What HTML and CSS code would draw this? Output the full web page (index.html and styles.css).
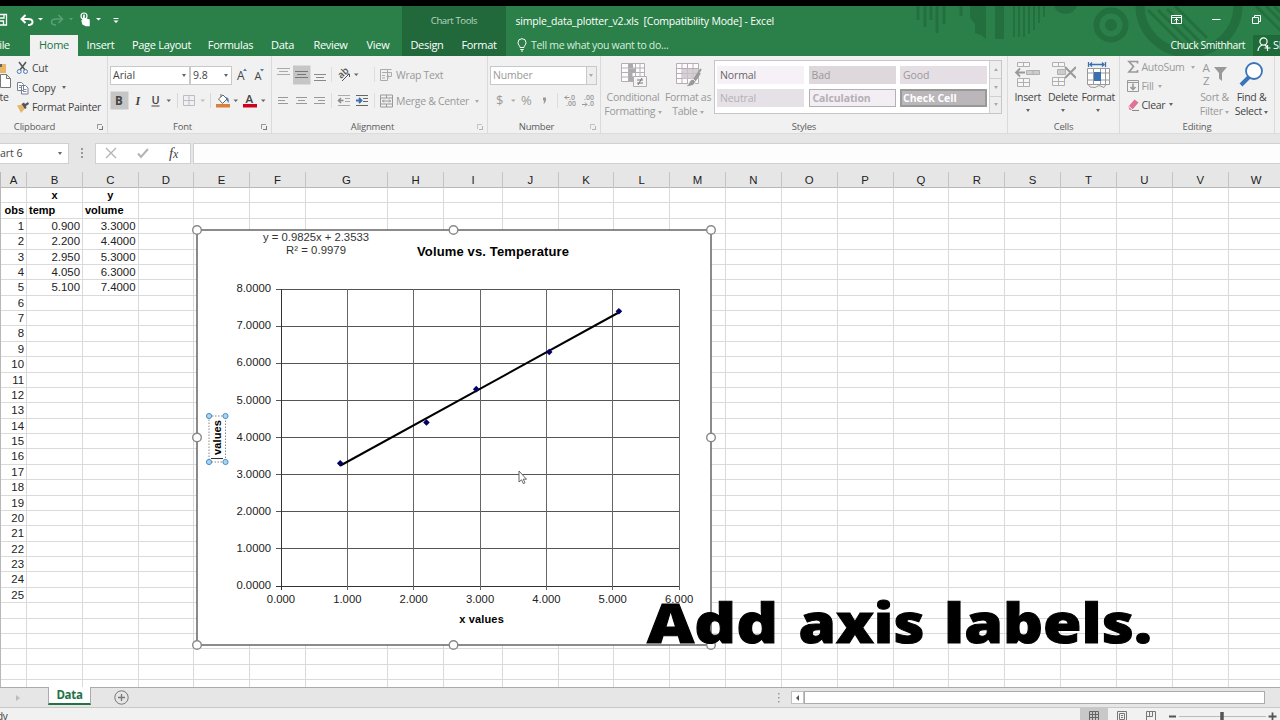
FILE: index.html
```html
<!DOCTYPE html>
<html lang="en">

<head>
  <meta charset="UTF-8">
  <meta name="viewport" content="width=device-width, initial-scale=1.0">
  <title>simple_data_plotter_v2.xls - Excel</title>
  <link rel="stylesheet" href="styles.css">
</head>

<body>
  <div class="screen">
    <div class="letterbox"></div>

    <header class="titlebar">
      <svg class="deco" viewBox="900 6 380 50" width="380" height="50">
        <g stroke="#236f3e" fill="none">
          <path d="M918 6v14M925 6v21M931 6v14M937 6v27M944 6v18M961 6v10" stroke-width="3" />
          <path d="M970 6h16v33l-5-4-6-2v-9l-5-6zM995 6h9v33h-9z" fill="#236f3e" stroke="none" />
          <path d="M1014 6v31M1019 6v31M1024 6v31M1029 6v28M1034 6v24M1039 6v17M1044 6v11" stroke-width="2" />
          <path d="M1054 6a12 11 0 0 0 23 0z" fill="#236f3e" stroke="none" />
          <circle cx="1111" cy="25" r="14.500" stroke-width="6" />
          <circle cx="1111" cy="25" r="6" fill="#236f3e" stroke="none" />
          <path d="M1140 6a48 46 0 0 0 98 0" stroke-width="9" />
          <path d="M1148 10l39 39M1158 10l37 37M1167 9l33 33M1175 6l32 32" stroke-width="3" />
          <path d="M1256 6l26 26M1266 6l16 16M1274 6l8 8" stroke-width="3" />
        </g>
      </svg>

      <div class="title-row">
        <svg class="quick" viewBox="0 6 130 29" width="130" height="29" fill="none" stroke="#fff">
          <path d="M-4 14.500h10.500v10.500h-10.500M-2 25v-4h5.500v4M-2 15v3h6v-3" stroke-width="1.300" />
          <path d="M22 19h6c6 0 6 6 0 6M25.500 15l-4 4 4 4" stroke-width="2" />
          <path d="M38 18h5l-2.500 2.500z" fill="#fff" stroke="none" />
          <g stroke="#5b9f72"><path d="M62 19h-6c-6 0-6 6 0 6M58.500 15l4 4-4 4" stroke-width="1.600" /></g>
          <path d="M69 18h4l-2 2.500z" fill="#5b9f72" stroke="none" />
          <path d="M82 20l1 4 3 1.500h3V20l-5-1.500v-4" fill="#fff" stroke-width="1.500" />
          <circle cx="84" cy="16" r="3" stroke-width="1.200" />
          <path d="M96 18h5l-2.500 2.500zM113.500 20.500h5l-2.500 2.500z" fill="#fff" stroke="none" />
          <path d="M113.500 18.500h5" stroke-width="1" />
        </svg>
        <div class="chart-tools-title">Chart Tools</div>
        <div class="doc-title">simple_data_plotter_v2.xls&nbsp; [Compatibility Mode] - Excel</div>
        <svg class="win-buttons" viewBox="1165 6 115 29" width="115" height="29" fill="none" stroke="#fff">
          <path d="M1171.500 15.500h10v8h-10zM1171.500 17.500h10M1176.500 23v-4.500M1174.500 20.500l2-2 2 2" />
          <path d="M1212 19.500h8.500M1252.500 17.500h6v6h-6zM1254.500 17v-1.500h6v6h-2" />
        </svg>
      </div>

      <nav class="tabs">
        <div class="tab file">File</div>
        <div class="tab home">Home</div>
        <div class="tab insert">Insert</div>
        <div class="tab layout">Page Layout</div>
        <div class="tab formulas">Formulas</div>
        <div class="tab data">Data</div>
        <div class="tab review">Review</div>
        <div class="tab view">View</div>
        <div class="context-tabs">
          <div class="tab design">Design</div>
          <div class="tab format">Format</div>
        </div>
        <div class="tell-me">
          <svg viewBox="0 0 10 14" width="10" height="14" fill="none" stroke="#fff">
            <path d="M3 9.500C3 7.500 1 7 1 4.700a4 4 0 0 1 8 0C9 7 7 7.500 7 9.500zM3.300 11.500h3.400M4 13h2" />
          </svg>
          <span>Tell me what you want to do...</span>
        </div>
        <div class="user">Chuck Smithhart</div>
        <div class="share">
          <svg viewBox="0 0 14 15" width="14" height="15" fill="none" stroke="#fff" stroke-width="1.200">
            <circle cx="6.500" cy="4.500" r="3.600" />
            <path d="M1 14c0-4 2-5 4-6M8 8l2 2M7.500 11h6M10.500 8v6" />
          </svg>
          <span>Share</span>
        </div>
      </nav>
    </header>

    <section class="ribbon">
      <div class="group clipboard">
        <div class="group-body">
          <div class="paste">
            <svg viewBox="0 62 12 28" width="12" height="28">
              <path d="M0 64h6v9H0z" fill="#e8b765" />
              <path d="M-2 64h4v3h-4z" fill="#666" />
              <path d="M.5 74.500h6l4 4v9H.5zM6.500 74.500v4h4" fill="#fff" stroke="#777" />
            </svg>
            <span>Paste</span>
          </div>
          <div class="stack">
            <div class="cmd">
              <svg viewBox="0 0 16 14" width="16" height="14" fill="none">
                <path d="M3 1l6 8M10 1L4 9" stroke="#555" stroke-width="1.500" />
                <circle cx="3.200" cy="10.500" r="2" stroke="#4a7ebb" /><circle cx="9.500" cy="10.500" r="2" stroke="#4a7ebb" />
              </svg>Cut</div>
            <div class="cmd">
              <svg viewBox="0 0 16 14" width="16" height="14" fill="#fff" stroke="#7a7f88">
                <path d="M1.500 1.500h4l2 2v6h-6zM5.500 4.500h4l2.500 2.500v6H5.500z" />
                <path d="M3 4.500h2M3 6.500h2M7 8.500h3.500M7 10.500h3.500" stroke="#6f94c4" />
              </svg>Copy<i class="caret wide"></i></div>
            <div class="cmd">
              <svg viewBox="0 0 16 14" width="16" height="14">
                <path d="M1 5.500l5-1 3 4-4 4.500-1.500-3z" fill="#e8b765" />
                <path d="M5.500 4l2.500-1.500 1 1.500 3-2 1 2-3 2 .5 2-1.500 1z" fill="#555" />
              </svg>Format Painter</div>
          </div>
        </div>
        <div class="group-label"><span>Clipboard</span><i class="launcher"></i></div>
      </div>

      <div class="group font">
        <div class="group-body rows">
          <div class="row">
            <div class="combo name">Arial<i class="caret"></i></div>
            <div class="combo size">9.8<i class="caret"></i></div>
            <svg viewBox="232 65 38 20" width="38" height="20">
              <text class="glyph" x="237" y="79.500" font-size="12">A</text>
              <text class="glyph" x="254.500" y="79.500" font-size="11">A</text>
              <path d="M243 71l2-2.500 2 2.500zM260 69h4l-2 2.500z" fill="#4a7ebb" />
            </svg>
          </div>
          <div class="row">
            <svg viewBox="108 91 163 20" width="163" height="20">
              <path d="M110.500 91.500h18v18h-18z" fill="#c6c6c6" />
              <text class="glyph bold" x="115" y="104.500" font-size="11.500">B</text>
              <text class="glyph ital" x="135.500" y="104.500" font-size="12">I</text>
              <text class="glyph semi" x="151.500" y="104" font-size="11">U</text>
              <path d="M151.500 106h8" stroke="#444" />
              <path d="M166.500 99.500h4.500l-2.250 2.500zM233.500 99.500h4.500l-2.250 2.500zM261 99.500h4.500l-2.250 2.500z" fill="#666" />
              <path d="M200.500 99.500h4.500l-2.250 2.500z" fill="#bbb" />
              <path d="M177.500 93v15M210.500 93v15" stroke="#d8d8d8" />
              <path d="M183.500 95.500h11v10h-11zM189 95.500v10M183.500 100.500h11" stroke="#c0bac6" fill="none" />
              <path d="M218.500 99l4.500-4 4 4-4.500 4.500zM221 97v-3" fill="#fff" stroke="#666" />
              <path d="M226 97c3 1 3 3 2.500 6l-2-3z" fill="#4a7ebb" />
              <path d="M216 104h14v3.500h-14z" fill="#dd7f3b" />
              <text class="glyph semi" x="245.500" y="103" font-size="11.500">A</text>
              <path d="M243 104h14v3.500h-14z" fill="#d0021b" />
            </svg>
          </div>
        </div>
        <div class="group-label"><span>Font</span><i class="launcher"></i></div>
      </div>

      <div class="group alignment">
        <div class="group-body rows">
          <div class="row">
            <svg viewBox="272 65 108 20" width="108" height="20" fill="none" stroke="#888">
              <path d="M293 65.500h17.500v19H293z" fill="#c6c6c6" stroke="none" />
              <path d="M277 68.500h13M279 71.500h9M277 74.500h13" stroke="#aaa" />
              <path d="M295 71.500h13M297 74.500h9M295 77.500h13" stroke="#777" />
              <path d="M314 74.500h12M316 77.500h8M314 80.500h12" />
              <path d="M331.500 67v15M374.500 67v15" stroke="#ddd" />
              <text class="glyph semi" x="0" y="0" font-size="9.500" stroke="none" transform="translate(341,79) rotate(-42)">ab</text>
              <path d="M342 81l7-7M346.500 74h3v3" stroke="#555" />
              <path d="M354 73.500h4.500l-2.250 2.500z" fill="#666" stroke="none" />
            </svg>
            <svg viewBox="0 0 16 14" width="16" height="14" fill="none" stroke="#aaa">
              <path d="M.500 1.500h7v11h-7zM2 4.500h9.500v4H7M9 6.500l-2 2 2 2M2 7.500h3M2 10h3M7.500 1.500h4" />
            </svg>
            <span class="off wrap">Wrap Text</span>
          </div>
          <div class="row">
            <svg viewBox="272 91 108 20" width="108" height="20" fill="none" stroke="#999">
              <path d="M278 97.500h10M278 100.500h7M278 103.500h10M296 97.500h11M298 100.500h7M296 103.500h11M314 97.500h11M318 100.500h7M314 103.500h11" />
              <path d="M331.500 93v15M374.500 93v15" stroke="#ddd" />
              <path d="M338 95.500h12M345 98.500h5M345 101.500h5M338 105.500h12" stroke="#aaa" />
              <path d="M338.500 100.500h5M341 98l-2.500 2.500 2.500 2.500" stroke="#888" stroke-width="1.500" />
              <path d="M356 95.500h12M363 98.500h5M363 101.500h5M356 105.500h12" stroke="#666" />
              <path d="M356 100.500h5.500M359 98l2.500 2.500-2.500 2.500" stroke="#3a6fb0" stroke-width="1.800" />
            </svg>
            <svg viewBox="0 0 16 14" width="16" height="14" fill="none" stroke="#999">
              <path d="M.500 1h12v12h-12zM.500 4h12M.500 10h12M6.500 1v3M6.500 10v3M2 7h9M4 5.500L2.500 7 4 8.500M9 5.500L10.500 7 9 8.500" />
            </svg>
            <span class="off merge">Merge &amp; Center</span><i class="caret dim"></i>
          </div>
        </div>
        <div class="group-label"><span>Alignment</span><i class="launcher dim"></i></div>
      </div>

      <div class="group number">
        <div class="group-body rows">
          <div class="row">
            <div class="combo numfmt">Number<i class="caret dim"></i></div>
          </div>
          <div class="row">
            <svg viewBox="488 91 112 20" width="112" height="20" fill="#999">
              <text class="glyph" x="496" y="105" font-size="13">$</text>
              <path d="M511 99.500h4.500l-2.250 2.500z" fill="#aaa" />
              <text class="glyph" x="521" y="105" font-size="13">%</text>
              <path d="M543 97.500h3v3l-1.500 3h-1l.7-3H543z" />
              <path d="M557.500 93v15" stroke="#ddd" />
              <g font-size="7" font-weight="600">
                <text class="glyph" x="569" y="99.500">.0</text><text class="glyph" x="566" y="106">.00</text>
                <text class="glyph" x="584" y="99.500">.00</text><text class="glyph" x="588" y="106">.0</text>
              </g>
              <path d="M564.500 97.500h5M567 95.500l-2 2 2 2M582 104.500h5M585 102.500l2 2-2 2" fill="none" stroke="#999" />
            </svg>
          </div>
        </div>
        <div class="group-label"><span>Number</span><i class="launcher dim"></i></div>
      </div>

      <div class="group styles">
        <div class="group-body">
          <div class="big off cond">
            <svg viewBox="0 0 27 26" width="27" height="26" fill="none" stroke="#b5afb5">
              <path d="M1.500 1.500h23v18h-23zM1.500 6h23M1.500 10.500h23M1.500 15h23M8.500 1.500v18M15.500 1.500v18M20 1.500v18" fill="#fdfbfd" />
              <path d="M9 2h4v4H9zM9 6.500h7v4H9zM9 11h3.500v4H9zM9 15h6v4H9z" fill="#aaa" stroke="none" />
              <path d="M13.500 14.500h13v10h-13z" fill="#f5f5f5" />
              <path d="M17 18h6M17 21h6M22 16l-4 7" stroke="#777" />
            </svg>
            <span>Conditional<br>Formatting <i class="caret dim"></i></span>
          </div>
          <div class="big off as-table">
            <svg viewBox="0 0 27 26" width="27" height="26" fill="none" stroke="#b5afb5">
              <path d="M1.500 1.500h22v20h-22zM1.500 6.500h22M1.500 11.500h22M1.500 16.500h22M7 1.500v20M12.500 1.500v20M18 1.500v20" fill="#fdfbfd" />
              <path d="M7.500 7h16v10h-16z" fill="#ccc6cc" stroke="none" opacity=".8" />
              <path d="M26 7l-8 12M25 11l-6 9" stroke="#999" stroke-width="2" />
              <path d="M18 17l2.500 2.500c-1 4-4 5-10 5 4-2 3-6 7.500-7.500z" fill="#999" stroke="#f1f1f1" />
            </svg>
            <span>Format as<br>Table <i class="caret dim"></i></span>
          </div>
          <div class="gallery">
            <div class="swatches">
              <div class="swatch normal">Normal</div>
              <div class="swatch bad">Bad</div>
              <div class="swatch good">Good</div>
              <div class="swatch neutral">Neutral</div>
              <div class="swatch calc">Calculation</div>
              <div class="swatch check">Check Cell</div>
            </div>
            <div class="gallery-scroll">
              <div><i class="caret dim up"></i></div>
              <div><i class="caret dim"></i></div>
              <div><i class="caret dim"></i></div>
            </div>
          </div>
        </div>
        <div class="group-label"><span>Styles</span></div>
      </div>

      <div class="group cells">
        <div class="group-body">
          <div class="big">
            <svg viewBox="0 0 27 26" width="27" height="26" fill="#f6f6f6" stroke="#b0b0b0">
              <path d="M3.500.500h12v4h-12zM9.500.500v4M3.500 16.500h12v8h-12zM9.500 16.500v8M3.500 20.500h12" />
              <path d="M12.500 8.500h13v4h-13zM19 8.500v4" fill="#ccc" />
              <path d="M11 10.500H2M6 6.500l-4 4 4 4" fill="none" stroke="#999" stroke-width="1.800" />
            </svg>
            <span>Insert</span><i class="caret"></i>
          </div>
          <div class="big">
            <svg viewBox="0 0 27 26" width="27" height="26" fill="#f6f6f6" stroke="#b0b0b0">
              <path d="M3.500.500h12v4h-12zM9.500.500v4M3.500 15.500h12v8h-12zM9.500 15.500v8M3.500 19.500h12" />
              <path d="M8.500 7.500h8v5h-8z" fill="#ccc" />
              <path d="M16 5l11 11M27 5L16 16" stroke="#999" stroke-width="2" />
            </svg>
            <span>Delete</span><i class="caret"></i>
          </div>
          <div class="big">
            <svg viewBox="0 0 27 26" width="27" height="26" fill="#fff" stroke="#999">
              <path d="M2.500 6.500h22v16h-22zM2.500 11h22M2.500 18h22M8.500 6.500v16M15.500 6.500v16M20.500 6.500v16" />
              <path d="M3 22l2 3 5 .500 4-2 5 2 2-3" fill="none" />
              <path d="M9 10h7v9H9z" fill="#3a6fb0" stroke="none" />
              <path d="M3.500 0v5M20.500 0v5M5 2.500h14M7 .500l-2 2 2 2M17 .500l2 2-2 2" fill="none" stroke="#3a6fb0" stroke-width="1.300" />
            </svg>
            <span>Format</span><i class="caret"></i>
          </div>
        </div>
        <div class="group-label"><span>Cells</span></div>
      </div>

      <div class="group editing">
        <div class="group-body">
          <div class="stack">
            <div class="cmd off">
              <svg viewBox="0 0 15 14" width="15" height="14" fill="none" stroke="#999" stroke-width="1.700">
                <path d="M10.500 3.500V1.500H2l4.500 5L2 12h8.500v-2" />
              </svg>AutoSum<i class="caret dim wide"></i></div>
            <div class="cmd off">
              <svg viewBox="0 0 15 14" width="15" height="14" fill="none" stroke="#999">
                <path d="M.500 1.500h11v11H.500zM.500 3.500h11" />
                <path d="M6 4.500v6M3.500 8L6 10.500 8.500 8" stroke-width="1.600" />
              </svg>Fill<i class="caret dim"></i></div>
            <div class="cmd">
              <svg viewBox="0 0 15 14" width="15" height="14">
                <path d="M1.500 8.500l6-7 4 3-6 7-3 .5z" fill="#e0729a" />
                <path d="M2 8.500l3.500 3" stroke="#fff" />
                <path d="M5 12.500h7" stroke="#888" />
              </svg>Clear<i class="caret"></i></div>
          </div>
          <div class="big off sort">
            <svg viewBox="0 0 27 26" width="27" height="26">
              <text class="glyph" x="1.500" y="9.500" font-size="11.500">A</text>
              <text class="glyph" x="2" y="22.500" font-size="11.500">Z</text>
              <path d="M13 5h13l-5 6v8l-3-2.500V11z" fill="#999" />
            </svg>
            <span>Sort &amp;<br>Filter <i class="caret dim"></i></span>
          </div>
          <div class="big find">
            <svg viewBox="0 0 27 26" width="27" height="26" fill="#fff" stroke="#3a74b8">
              <path d="M11 15l-8 8" stroke-width="4" />
              <circle cx="16" cy="9" r="8" stroke-width="1.800" />
            </svg>
            <span>Find &amp;<br>Select <i class="caret"></i></span>
          </div>
        </div>
        <div class="group-label"><span>Editing</span></div>
      </div>
    </section>

    <section class="formula-bar">
      <div class="name-box"><span>Chart 6</span><i class="caret"></i></div>
      <svg class="grip" viewBox="0 0 4 12" width="4" height="12" fill="#999">
        <path d="M1 1h2v2H1zM1 5h2v2H1zM1 9h2v2H1z" />
      </svg>
      <div class="fx-box">
        <svg viewBox="0 0 12 12" width="12" height="12" stroke="#b4b4b4" stroke-width="1.400"><path d="M1 1l10 10M11 1L1 11" /></svg>
        <svg viewBox="0 0 12 12" width="12" height="12" fill="none" stroke="#b4b4b4" stroke-width="2"><path d="M1 6.500L4 10l7-8" /></svg>
        <span class="fx">f<small>x</small></span>
      </div>
      <div class="formula-input"></div>
    </section>

    <section class="sheet">
      <div class="col-heads" id="heads"></div>
      <div class="cells-area" id="cells"></div>

      <svg class="chart" viewBox="190 222 530 430" width="530" height="430">
        <rect x="197" y="230" width="514" height="415" fill="#fff" stroke="#666" stroke-width="1.500" />
        <g id="plot-grid" fill="none" shape-rendering="crispEdges"></g>
        <path class="trend" d="M340.500 465.500L620.500 311.500" />
        <g id="points" fill="#000066"></g>
        <text class="eq" x="316" y="241" textLength="106">y = 0.9825x + 2.3533</text>
        <text class="eq" x="316" y="254" textLength="60">R² = 0.9979</text>
        <text class="chart-title" x="493" y="256" textLength="152">Volume vs. Temperature</text>
        <text class="axis-title" x="481.500" y="623" textLength="44.500">x values</text>
        <g id="axis-labels"></g>

        <rect x="209" y="416" width="16.500" height="46" fill="none" stroke="#888" stroke-dasharray="1.500 1.500" />
        <text class="axis-title" transform="translate(221,437.500) rotate(-90)" textLength="35">values</text>
        <path d="M211 458.500h12" stroke="#333" />
        <g fill="#a9d3f0" stroke="#4a90c8">
          <circle cx="209" cy="416" r="2.600" /><circle cx="225.500" cy="416" r="2.600" />
          <circle cx="209" cy="462" r="2.600" /><circle cx="225.500" cy="462" r="2.600" />
        </g>
        <g fill="#fff" stroke="#888" stroke-width="1.400">
          <circle cx="197" cy="230" r="4.300" /><circle cx="453.500" cy="230" r="4.300" /><circle cx="711" cy="230" r="4.300" />
          <circle cx="197" cy="437.500" r="4.300" /><circle cx="711" cy="437.500" r="4.300" />
          <circle cx="197" cy="645" r="4.300" /><circle cx="453.500" cy="645" r="4.300" /><circle cx="711" cy="645" r="4.300" />
        </g>
        <path d="M519 471v11l2.500-2.200 1.800 3.800 1.700-.800-1.700-3.600h3.200z" fill="#fff" stroke="#555" stroke-width=".900" />
      </svg>
    </section>

    <section class="sheet-tabs">
      <i class="nav-arrow"></i>
      <div class="sheet-tab">Data</div>
      <svg class="add" viewBox="0 0 15 15" width="15" height="15" fill="none" stroke="#777">
        <circle cx="7.500" cy="7.500" r="6.700" /><path d="M7.500 4v7M4 7.500h7" stroke-width="1.300" />
      </svg>
      <svg class="grip" viewBox="0 0 4 12" width="4" height="12" fill="#999">
        <path d="M1 1h1.500v1.500H1zM1 5h1.500v1.500H1zM1 9h1.500v1.500H1z" />
      </svg>
      <div class="scroll-left"><i></i></div>
      <div class="scroll-thumb"></div>
    </section>

    <footer class="status">
      <span class="ready">Ready</span>
      <div class="view-btn active">
        <svg viewBox="0 0 10 10" width="10" height="10" fill="none" stroke="#666"><path d="M.500.500h9v9h-9zM.500 3.500h9M.500 6.500h9M3.500.500v9M6.500.500v9" /></svg>
      </div>
      <div class="view-btn">
        <svg viewBox="0 0 10 10" width="10" height="10" fill="none" stroke="#777"><path d="M.500.500h9v9h-9zM2.500 2.500h5v6h-5zM4 4.500h2M4 6.500h2" /></svg>
      </div>
      <div class="view-btn">
        <svg viewBox="0 0 10 10" width="10" height="10" fill="none" stroke="#777"><path d="M.500 10V.500h9V10M3.500.500v5M6.500.500v5h-6" /></svg>
      </div>
      <svg class="zoom" viewBox="1165 708 115 12" width="115" height="12" fill="none" stroke="#555">
        <path d="M1169 716.500h7M1268.500 716.500h8M1272.500 712.500v8" stroke-width="1.800" />
        <path d="M1179 716.500h87" stroke="#bbb" /><path d="M1222 712v8" stroke-width="3.500" />
      </svg>
    </footer>

    <svg class="caption" viewBox="640 590 520 66" width="520" height="66">
      <text x="647" y="642.500" textLength="131" lengthAdjust="spacingAndGlyphs">Add</text>
      <text x="798.500" y="642.500" textLength="126" lengthAdjust="spacingAndGlyphs">axis</text>
      <text x="944" y="642.500" textLength="208" lengthAdjust="spacingAndGlyphs">labels.</text>
    </svg>
  </div>

  <script src="sheet.js"></script>
</body>

</html>
```

FILE: styles.css
```css
* {
  box-sizing: border-box;
}

body {
  margin: 0;
  font-family: "Open Sans", "Noto Sans", sans-serif;
  font-size: 10.5px;
  letter-spacing: -0.3px;
  color: #444;
}

svg {
  display: block;
  flex: none;
}

.screen {
  position: relative;
  width: 1280px;
  height: 720px;
  overflow: hidden;
  display: flex;
  flex-direction: column;
  background: #e6e6e6;
}

.letterbox {
  height: 6px;
  background: #000;
}

/* title bar */
.titlebar {
  position: relative;
  height: 50px;
  background: #2a8048;
  color: #fff;
}

.deco {
  position: absolute;
  top: 0;
  right: 0;
}

.title-row {
  position: relative;
  display: flex;
  height: 29px;
  line-height: 30px;
}

.chart-tools-title {
  width: 104px;
  margin-left: 272px;
  background: #21683b;
  color: #b7d8c2;
  text-align: center;
  font-size: 9.6px;
  letter-spacing: -0.4px;
}

.doc-title {
  margin-left: 9.5px;
  font-size: 10.5px;
  letter-spacing: -0.2px;
  white-space: nowrap;
}

.win-buttons {
  margin-left: auto;
}

.tabs {
  position: relative;
  display: flex;
  height: 21px;
  line-height: 20px;
  font-size: 11px;
  letter-spacing: -0.3px;
  white-space: nowrap;
}

.tab {
  flex: none;
  text-align: center;
}

.file { width: 30px; padding-right: 20px; display: flex; justify-content: flex-end; }
.home { width: 48px; background: #f1f1f1; color: #217346; }
.insert { width: 45px; }
.layout { width: 77px; }
.formulas { width: 61px; }
.data { width: 43px; }
.review { width: 53px; }
.view { width: 42px; }

.context-tabs {
  display: flex;
  margin-left: 3px;
  width: 104px;
  background: #21683b;
}

.design { width: 50px; }
.format { width: 54px; }

.tell-me {
  display: flex;
  gap: 4px;
  width: 658px;
  padding-left: 11px;
  color: #d9ecdf;
  font-size: 10.5px;
}

.tell-me svg {
  margin-top: 3px;
}

.user {
  width: 89px;
  padding-left: 6.5px;
  font-size: 10.4px;
  letter-spacing: -0.4px;
}

.share {
  display: flex;
  gap: 2px;
  width: 27px;
  padding: 0 0 0 4px;
  overflow: hidden;
  background: #1f6a39;
}

.share svg {
  margin-top: 2px;
}

/* ribbon */
.ribbon {
  display: flex;
  height: 78px;
  background: #f1f1f1;
  border-bottom: 1px solid #dcdcdc;
}

.group {
  flex: none;
  display: flex;
  flex-direction: column;
  border-right: 1px solid #dadada;
  white-space: nowrap;
}

.group-body {
  display: flex;
  height: 64px;
}

.group-label {
  display: flex;
  justify-content: center;
  height: 13px;
  line-height: 13px;
  font-size: 9.5px;
  letter-spacing: -0.2px;
  color: #5c5c5c;
  position: relative;
}

.clipboard { width: 108px; }
.font { width: 164px; }
.alignment { width: 216px; }
.number { width: 113px; }
.styles { width: 407px; }
.cells { width: 112px; }
.editing { width: 155px; }

.clipboard .group-label { padding-right: 38px; }
.font .group-label { padding-right: 14px; }
.alignment .group-label { padding-right: 14px; }
.number .group-label { padding-right: 15px; }

.launcher {
  position: absolute;
  right: 5px;
  top: 4px;
  width: 5px;
  height: 5px;
  border-left: 1px solid #999;
  border-top: 1px solid #999;
}

.launcher::after {
  content: "";
  position: absolute;
  left: 1px;
  top: 1px;
  width: 3px;
  height: 3px;
  border-right: 1px solid #777;
  border-bottom: 1px solid #777;
}

.launcher.dim {
  opacity: 0.5;
}

.caret {
  display: inline-block;
  flex: none;
  width: 0;
  height: 0;
  border: 2.5px solid transparent;
  border-width: 3px 2.5px 0;
  border-top-color: #666;
  vertical-align: middle;
}

.caret.dim { border-top-color: #aaa; }
.caret.up { transform: rotate(180deg); }

.off {
  color: #999;
}

.paste {
  width: 16px;
  padding-top: 6px;
  overflow: hidden;
}

.paste span {
  display: flex;
  justify-content: flex-end;
  width: 8.5px;
}

.stack {
  padding-top: 2.5px;
}

.cmd {
  display: flex;
  align-items: center;
  height: 19.5px;
}

.cmd .caret { margin-left: 4px; }
.cmd .caret.wide { margin-left: 7px; }

.rows {
  flex-direction: column;
  gap: 6px;
  padding-top: 9px;
}

.row {
  display: flex;
  align-items: center;
  height: 20px;
}

.combo {
  display: flex;
  align-items: center;
  justify-content: space-between;
  height: 19px;
  padding: 0 3px 0 2px;
  background: #fff;
  border: 1px solid #c8c8c8;
  letter-spacing: 0;
}

.combo.name { width: 80px; margin-left: 2px; }
.combo.size { width: 42px; }

.combo.numfmt {
  width: 107px;
  margin-left: 2px;
  color: #999;
  letter-spacing: -0.2px;
  background: linear-gradient(to right, #fff 95px, #c8c8c8 95px, #c8c8c8 96px, #eee 96px);
}

.glyph { fill: #444; letter-spacing: 0; }
.alignment .glyph { fill: #555; }
.number .glyph, .sort .glyph { fill: #999; }
.bold { font-weight: 700; }
.semi { font-weight: 600; }
.ital { font-style: italic; font-family: "Liberation Serif", serif; font-weight: 700; }

.merge { margin-right: 6px; }

.big {
  display: flex;
  flex-direction: column;
  align-items: center;
  padding-top: 6px;
  line-height: 14px;
  text-align: center;
}

.big span {
  margin-top: 2px;
}

.big > .caret {
  margin-top: 5px;
}

.cond { width: 58px; margin-left: 3px; }
.as-table { width: 52px; }

.gallery {
  display: flex;
  width: 288px;
  height: 54px;
  margin-top: 4px;
  background: #fff;
  border: 1px solid #c6c6c6;
}

.swatches {
  display: grid;
  grid-template-columns: repeat(3, 87px);
  grid-template-rows: 18px 18px;
  gap: 5px 4.5px;
  padding: 5px 2px;
}

.swatch {
  padding-left: 3px;
  line-height: 18px;
  background: #e5dfe5;
  color: #999;
  letter-spacing: -0.1px;
}

.swatch.normal { background: #f6f1f6; color: #666; }
.swatch.bad { background: #ded8dc; }
.swatch.neutral { background: #e6e1e7; color: #b4afb4; }
.swatch.calc { background: #f2eef3; border: 1px solid #b5b0b5; line-height: 16px; font-weight: 700; color: #b4afb4; letter-spacing: -0.1px; }
.swatch.check { background: #bab6ba; border: 2px solid #999; line-height: 14px; font-weight: 700; color: #fff; padding-left: 1px; letter-spacing: 0; }

.gallery-scroll {
  display: grid;
  grid-template-rows: repeat(3, 1fr);
  width: 13px;
  margin-left: auto;
  background: #eee;
  border-left: 1px solid #d0d0d0;
}

.gallery-scroll div {
  display: flex;
  align-items: center;
  justify-content: center;
}

.gallery-scroll div + div {
  border-top: 1px solid #d0d0d0;
}

.cells .big { width: 35.3px; }
.cells .big:first-child { margin-left: 2px; }

.editing .stack { width: 76px; padding-left: 6.5px; padding-top: 2px; }
.editing .cmd { height: 18.7px; }
.editing .big { width: 37px; }

/* formula bar */
.formula-bar {
  display: flex;
  align-items: center;
  height: 38px;
  flex: none;
}

.name-box {
  display: flex;
  align-items: center;
  justify-content: space-between;
  width: 69px;
  height: 21px;
  padding-right: 6px;
  background: #fff;
  border: 1px solid #d0d0d0;
  border-left: 0;
  letter-spacing: 0;
}

.name-box span {
  display: flex;
  justify-content: flex-end;
  width: 22.5px;
  white-space: nowrap;
}

.formula-bar .grip {
  margin-left: 11px;
}

.fx-box {
  display: flex;
  align-items: center;
  width: 96px;
  height: 21px;
  margin-left: 11px;
  padding-left: 9px;
  gap: 20px;
  background: #fff;
  border: 1px solid #d0d0d0;
}

.fx {
  font: italic 15px "Liberation Serif", serif;
  color: #444;
}

.fx small {
  font-size: 12px;
}

.formula-input {
  flex: 1;
  height: 21px;
  margin-left: 2px;
  background: #fdfdfd;
  border: 1px solid #d0d0d0;
  border-right: 0;
}

/* sheet */
.sheet {
  position: relative;
  height: 515px;
  flex: none;
  overflow: hidden;
  background: #fff;
  font-family: "Liberation Sans", Arial, sans-serif;
  font-size: 11.4px;
  letter-spacing: 0;
  color: #222;
  border-left: 1px solid #b8b8b8;
}

.col-heads,
.cells-area {
  display: grid;
  grid-template-columns: 26px 56px 55.500px 55.500px 56px 56px 82px 56px 59px 55.700px 55.700px 55.800px repeat(11, 55.850px);
}

.col-heads {
  height: 16px;
  line-height: 16px;
  background: #e6e6e6;
  border-bottom: 1px solid #b8b8b8;
  text-align: center;
}

.col-heads div {
  border-right: 1px solid #c4c4c4;
}

.cells-area {
  grid-auto-rows: 15.375px;
}

.cell {
  border-right: 1px solid #dadada;
  border-bottom: 1px solid #dadada;
  padding: 0 2px;
  line-height: 14.4px;
  white-space: nowrap;
}

.cell.num { text-align: right; }
.cell.head { font-weight: 700; font-size: 11px; color: #000; }
.cell.mid { text-align: center; }

.chart {
  position: absolute;
  left: 189px;
  top: 50px;
}

.chart text {
  font-size: 11.3px;
  fill: #222;
  text-anchor: middle;
}

.chart .y-label {
  text-anchor: end;
}

.chart .eq {
  fill: #333;
}

.chart .chart-title {
  font-size: 13px;
  font-weight: 700;
  fill: #000;
}

.chart .axis-title {
  font-size: 11px;
  font-weight: 700;
  fill: #000;
}

.trend {
  stroke: #000;
  stroke-width: 2;
}

/* sheet tabs and status bar */
.sheet-tabs {
  display: flex;
  align-items: center;
  height: 21px;
  flex: none;
  border-top: 1px solid #ababab;
  border-bottom: 1px solid #c8c8c8;
}

.nav-arrow {
  margin-left: 16px;
  border: 3px solid transparent;
  border-left: 4px solid #bdbdbd;
  border-right: 0;
}

.sheet-tab {
  align-self: flex-start;
  width: 43px;
  height: 18px;
  margin: -1px 0 0 28px;
  line-height: 16px;
  text-align: center;
  font-size: 11.5px;
  font-weight: 700;
  color: #217346;
  background: #fff;
  border-bottom: 2px solid #217346;
  border-left: 1px solid #ababab;
  border-right: 1px solid #ababab;
}

.add {
  margin-left: 23px;
}

.sheet-tabs .grip {
  margin-left: 648px;
}

.scroll-left {
  display: flex;
  align-items: center;
  justify-content: center;
  width: 13px;
  height: 13px;
  margin-left: 10px;
  background: #fff;
  border: 1px solid #c0c0c0;
}

.scroll-left i {
  border: 3px solid transparent;
  border-right: 3px solid #555;
  border-left: 0;
}

.scroll-thumb {
  width: 461px;
  height: 13px;
  background: #fff;
  border: 1px solid #ababab;
}

.status {
  display: flex;
  height: 12px;
  background: #f1f1f1;
  overflow: hidden;
  font-size: 10px;
}

.ready {
  display: flex;
  justify-content: flex-end;
  width: 7.5px;
  margin-right: 1072.5px;
  line-height: 17px;
}

.view-btn {
  width: 28.5px;
  padding: 3px 0 0 9px;
}

.view-btn.active {
  background: #c8c8c8;
}

.zoom {
  margin-left: auto;
}

.caption {
  position: absolute;
  left: 640px;
  top: 590px;
}

.caption text {
  font-size: 55.5px;
  font-weight: 800;
  letter-spacing: 0;
  fill: #000;
  stroke: #000;
  stroke-width: 1;
}
```

FILE: sheet.js
```js
const heads = document.getElementById('heads');
const cells = document.getElementById('cells');
const letters = 'ABCDEFGHIJKLMNOPQRSTUVW'.split('');
const temp = [0.9, 2.2, 2.95, 4.05, 5.1];
const volume = [3.3, 4.4, 5.3, 6.3, 7.4];

letters.forEach((l) => {
  heads.insertAdjacentHTML('beforeend', `<div>${l}</div>`);
});

const valueAt = (r, c) => {
  if (r === 0) return ['', 'x', 'y'][c];
  if (r === 1) return ['obs', 'temp', 'volume'][c];
  if (c === 0 && r < 27) return r - 1;
  if (c === 1 && r < 7) return temp[r - 2].toFixed(3);
  if (c === 2 && r < 7) return volume[r - 2].toFixed(4);
  return '';
};

let html = '';
for (let r = 0; r < 33; r++) {
  letters.forEach((l, c) => {
    let cls = 'cell';
    if (r === 0) cls += ' head mid';
    else if (r === 1) cls += c === 0 ? ' head num' : ' head';
    else cls += ' num';
    html += `<div class="${cls}">${valueAt(r, c) || ''}</div>`;
  });
}
cells.innerHTML = html;

// chart
const px = (x) => 281 + x * 66.35;
const py = (y) => 586 - y * 37.1;
let lines = '';
let labels = '';
for (let y = 0; y <= 8; y++) {
  lines += `<path d="M276 ${py(y)}H679" stroke="${y === 0 ? '#333' : '#555'}"/>`;
  labels += `<text class="y-label" x="271" y="${py(y) + 3}">${y.toFixed(4)}</text>`;
}
for (let x = 0; x <= 6; x++) {
  lines += `<path d="M${px(x)} 289V589.5" stroke="${x === 0 ? '#333' : '#666'}"/>`;
  labels += `<text x="${px(x)}" y="603">${x.toFixed(3)}</text>`;
}
document.getElementById('plot-grid').innerHTML = lines;
document.getElementById('axis-labels').innerHTML = labels;
document.getElementById('points').innerHTML = temp.map((t, i) => {
  return `<path d="M${px(t) - 0.5} ${py(volume[i]) - 3.5}l3.3 3.3-3.3 3.3-3.3-3.3z"/>`;
}).join('');
```
